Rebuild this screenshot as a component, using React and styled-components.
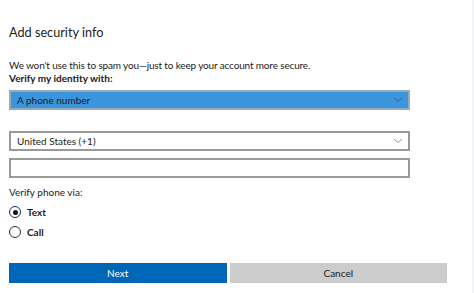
import styled, { createGlobalStyle } from "styled-components";

const GlobalStyle = createGlobalStyle`
  html, body {
    margin: 0;
    padding: 0;
    background: #ffffff;
  }
  body {
    font-family: Lato, "Noto Sans", Arial, sans-serif;
    color: #1b1b1b;
  }
`;

const Page = styled.div`
  display: flex;
  width: 474px;
  height: 293px;
  overflow: hidden;
`;

const Form = styled.div`
  flex: 1;
  display: flex;
  flex-direction: column;
  padding: 22px 0 0 9px;
`;

const Edge = styled.div`
  width: 2px;
  background: #eef4fa;
`;

const Title = styled.h1`
  margin: 0;
  font-size: 12.7px;
  line-height: 20px;
  font-weight: 400;
  color: #222;
`;

const Note = styled.p`
  margin: 17px 0 0;
  font-size: 10px;
  line-height: 13px;
  letter-spacing: -0.15px;
`;

const Label = styled.div`
  margin-top: ${(p) => p.$top || 0}px;
  font-size: 10px;
  line-height: 13px;
  font-weight: ${(p) => (p.$bold ? 700 : 400)};
`;

const Select = styled.div`
  box-sizing: border-box;
  width: 401px;
  height: 20px;
  margin-top: ${(p) => p.$top}px;
  display: flex;
  align-items: center;
  justify-content: space-between;
  padding: 0 5px 0 6px;
  border: 2px solid ${(p) => (p.$active ? "#9aaab8" : "#999")};
  background: ${(p) => (p.$active ? "#3a95dc" : "#fff")};
  font-size: 10px;
  color: #1b1b1b;
`;

const Input = styled.div`
  box-sizing: border-box;
  width: 401px;
  height: 20px;
  margin-top: 7px;
  border: 2px solid #999;
`;

const RadioRow = styled.div`
  display: flex;
  align-items: center;
  gap: 6px;
  height: 20px;
  margin-top: ${(p) => p.$top || 0}px;
  font-size: 10px;
  font-weight: 700;
`;

const Radio = styled.span`
  box-sizing: border-box;
  width: 12px;
  height: 12px;
  border-radius: 50%;
  border: 1.5px solid ${(p) => (p.$checked ? "#0b2d55" : "#333")};
  display: flex;
  align-items: center;
  justify-content: center;
  &::after {
    content: "";
    width: 5px;
    height: 5px;
    border-radius: 50%;
    background: ${(p) => (p.$checked ? "#111" : "transparent")};
  }
`;

const Buttons = styled.div`
  display: flex;
  gap: 3px;
  margin-top: 21px;
  width: 438px;
`;

const Button = styled.div`
  flex: 1;
  height: 20px;
  display: flex;
  align-items: center;
  justify-content: center;
  font-size: 10px;
  background: ${(p) => (p.$primary ? "#0067b8" : "#cccccc")};
  color: ${(p) => (p.$primary ? "#ffffff" : "#1b1b1b")};
`;

function Chevron({ color }) {
  return (
    <svg width="10" height="6" viewBox="0 0 10 6">
      <path d="M1 1 L5 4.5 L9 1" fill="none" stroke={color} strokeWidth="0.9" />
    </svg>
  );
}

export default function App() {
  return (
    <Page>
      <GlobalStyle />
      <Form>
        <Title>Add security info</Title>
        <Note>We won't use this to spam you—just to keep your account more secure.</Note>
        <Label $bold>Verify my identity with:</Label>
        <Select $active $top={5}>
          <span>A phone number</span>
          <Chevron color="#3d5f80" />
        </Select>
        <Select $top={21}>
          <span>United States (+1)</span>
          <Chevron color="#8a8a8a" />
        </Select>
        <Input />
        <Label $top={8}>Verify phone via:</Label>
        <RadioRow $top={3}>
          <Radio $checked />
          Text
        </RadioRow>
        <RadioRow>
          <Radio />
          Call
        </RadioRow>
        <Buttons>
          <Button $primary>Next</Button>
          <Button>Cancel</Button>
        </Buttons>
      </Form>
      <Edge />
    </Page>
  );
}
